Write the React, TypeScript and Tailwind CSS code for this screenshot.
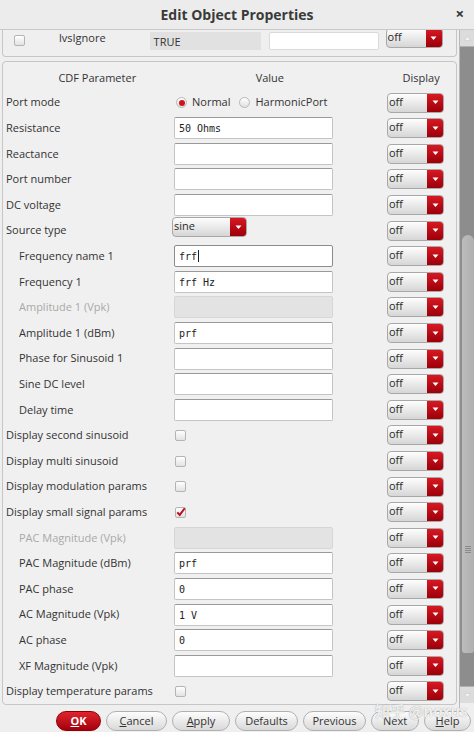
import React from 'react';

type Row = {
  label: string;
  indent?: boolean;
  disabled?: boolean;
  kind: 'input' | 'radio' | 'check' | 'select';
  value?: string;
  checked?: boolean;
  focus?: boolean;
};

const rows: Row[] = [
  { label: 'Port mode', kind: 'radio' },
  { label: 'Resistance', kind: 'input', value: '50 Ohms' },
  { label: 'Reactance', kind: 'input' },
  { label: 'Port number', kind: 'input' },
  { label: 'DC voltage', kind: 'input' },
  { label: 'Source type', kind: 'select', value: 'sine' },
  { label: 'Frequency name 1', indent: true, kind: 'input', value: 'frf', focus: true },
  { label: 'Frequency 1', indent: true, kind: 'input', value: 'frf Hz' },
  { label: 'Amplitude 1 (Vpk)', indent: true, kind: 'input', disabled: true },
  { label: 'Amplitude 1 (dBm)', indent: true, kind: 'input', value: 'prf' },
  { label: 'Phase for Sinusoid 1', indent: true, kind: 'input' },
  { label: 'Sine DC level', indent: true, kind: 'input' },
  { label: 'Delay time', indent: true, kind: 'input' },
  { label: 'Display second sinusoid', kind: 'check' },
  { label: 'Display multi sinusoid', kind: 'check' },
  { label: 'Display modulation params', kind: 'check' },
  { label: 'Display small signal params', kind: 'check', checked: true },
  { label: 'PAC Magnitude (Vpk)', indent: true, kind: 'input', disabled: true },
  { label: 'PAC Magnitude (dBm)', indent: true, kind: 'input', value: 'prf' },
  { label: 'PAC phase', indent: true, kind: 'input', value: '0' },
  { label: 'AC Magnitude (Vpk)', indent: true, kind: 'input', value: '1 V' },
  { label: 'AC phase', indent: true, kind: 'input', value: '0' },
  { label: 'XF Magnitude (Vpk)', indent: true, kind: 'input' },
  { label: 'Display temperature params', kind: 'check' },
];

function Combo({ value, wide }: { value: string; wide?: boolean }) {
  return (
    <div
      className={`flex h-[20px] ${wide ? 'w-[75px]' : 'w-[57px]'} overflow-hidden rounded-[4px] border border-[#a8a8a8] bg-linear-to-b from-[#fefefe] to-[#d6d6d6]`}
    >
      <span className="flex-1 pl-[1px] text-[11px] leading-[16px] text-[#2a2a2a]">{value}</span>
      <span className="flex w-[16px] items-center justify-center bg-linear-to-b from-[#d81822] to-[#9c0009]">
        <svg width="7" height="5" viewBox="0 0 7 5">
          <path d="M0.5 0.5h6L3.5 4z" fill="#fff" />
        </svg>
      </span>
    </div>
  );
}

function Check({ checked }: { checked?: boolean }) {
  return (
    <div className="relative h-[11px] w-[11px] rounded-[2px] border border-[#b4b4b4] bg-linear-to-b from-[#ffffff] to-[#e2e2e2]">
      {checked && (
        <svg className="absolute -top-[1px] left-[0px]" width="10" height="10" viewBox="0 0 12 12">
          <path d="M1.5 6.5 L4.5 9.5 L10.5 1.5" stroke="#c0101a" strokeWidth="2.4" fill="none" />
        </svg>
      )}
    </div>
  );
}

function Radio({ on }: { on?: boolean }) {
  return (
    <div className="flex h-[11px] w-[11px] items-center justify-center rounded-full border border-[#b8b8b8] bg-linear-to-b from-[#ffffff] to-[#e0e0e0]">
      {on && <div className="h-[6px] w-[6px] rounded-full bg-[#d0101c]" />}
    </div>
  );
}

function Field({ value, disabled, focus }: { value?: string; disabled?: boolean; focus?: boolean }) {
  return (
    <div
      className={`h-[22px] w-[159px] rounded-[2px] border pl-[4px] font-['DejaVu_Sans_Mono',monospace] text-[10px] leading-[21px] text-[#222] ${
        disabled
          ? 'border-[#d6d6d6] bg-[#e3e3e3]'
          : focus
          ? 'border-[#8c8c8c] bg-white'
          : 'border-[#c4c4c4] border-t-[#9a9a9a] bg-white'
      }`}
    >
      {value}
      {focus && <span className="ml-[1px] inline-block h-[12px] w-px translate-y-[2px] bg-[#222]" />}
    </div>
  );
}

function Btn({ children, red, w }: { children: React.ReactNode; red?: boolean; w: string }) {
  return (
    <div
      className={`flex h-[20px] ${w} items-center justify-center rounded-full border text-[11px] ${
        red
          ? 'border-[#8e0008] bg-linear-to-b from-[#e0222c] to-[#a3000b] font-bold text-white'
          : 'border-[#b0b0b0] bg-linear-to-b from-[#fdfdfd] to-[#d9d9d9] text-[#333]'
      }`}
    >
      {children}
    </div>
  );
}

export default function App() {
  return (
    <div className="relative flex h-[732px] w-[474px] flex-col overflow-hidden bg-[#efefef] font-['Open_Sans',sans-serif] text-[#333]">
      {/* title bar */}
      <div className="relative flex h-[30px] shrink-0 items-center justify-center border-b border-[#c9c9c9] bg-[#ececec]">
        <span className="text-[14px] font-bold text-[#3a3a3a]">Edit Object Properties</span>
        <span className="absolute right-[10px] top-[6px] text-[15px] font-bold leading-none text-[#333]">×</span>
      </div>

      <div className="flex h-[678px] shrink-0">
        <div className="flex w-[460px] flex-col border-r border-[#b9b9b9]">
          {/* top cut-off row */}
          <div className="mx-[2px] flex h-[27px] items-start rounded-b-[4px] border-x border-b border-[#c6c6c6] pt-[2px]">
            <div className="ml-[11px] mt-[3px]">
              <Check />
            </div>
            <span className="ml-[34px] text-[11px] leading-[12px]">lvsIgnore</span>
            <div className="ml-[44px] h-[18px] w-[111px] bg-[#e1e1e1] pl-[4px] text-[11px] leading-[20px] text-[#333]">TRUE</div>
            <div className="ml-[8px] h-[18px] w-[110px] rounded-[2px] border border-[#dadada] bg-white" />
            <div className="ml-[7px] -mt-[4px]">
              <Combo value="off" />
            </div>
          </div>

          {/* main panel */}
          <div className="mx-[2px] mt-[4px] flex h-[644px] flex-col rounded-[4px] border border-[#c6c6c6] bg-[#f0f0f0] pt-[4px]">
            <div className="flex h-[24px] items-center text-[11px] text-[#333]">
              <span className="w-[189px] text-center">CDF Parameter</span>
              <span className="w-[157px] text-center">Value</span>
              <span className="ml-[38px] w-[70px] text-center">Display</span>
            </div>
            {rows.map((r, i) => (
              <div key={i} className="flex h-[25.7px] items-center">
                <span
                  className={`w-[171px] shrink-0 text-[11px] ${r.indent ? 'pl-[16px]' : 'pl-[3px]'} ${
                    r.disabled ? 'text-[#a9a9a9]' : 'text-[#333]'
                  }`}
                >
                  {r.label}
                </span>
                <div className="flex w-[213px] shrink-0 items-center">
                  {r.kind === 'input' && <Field value={r.value} disabled={r.disabled} focus={r.focus} />}
                  {r.kind === 'check' && (
                    <div className="ml-[1px]">
                      <Check checked={r.checked} />
                    </div>
                  )}
                  {r.kind === 'radio' && (
                    <div className="ml-[2px] flex items-center text-[11px]">
                      <Radio on />
                      <span className="ml-[5px]">Normal</span>
                      <span className="ml-[9px]">
                        <Radio />
                      </span>
                      <span className="ml-[5px]">HarmonicPort</span>
                    </div>
                  )}
                  {r.kind === 'select' && (
                    <div className="-ml-[2px] -mt-[7px]">
                      <Combo value={r.value ?? ''} wide />
                    </div>
                  )}
                </div>
                <Combo value="off" />
              </div>
            ))}
          </div>
        </div>

        {/* scrollbar */}
        <div className="flex w-[14px] flex-col bg-[#8d8d8d]">
          <div className="flex h-[17px] items-center justify-center border-b border-[#b0b0b0] bg-[#dcdcdc]">
            <svg width="7" height="5" viewBox="0 0 7 5">
              <path d="M3.5 0.5L6.5 4.5h-6z" fill="#f4f4f4" stroke="#c4c4c4" strokeWidth="0.5" />
            </svg>
          </div>
          <div className="h-[188px]" />
          <div className="ml-[2px] flex h-[418px] flex-col items-center justify-center rounded-t-[6px] rounded-b-[3px] bg-linear-to-r from-[#bcbcbc] to-[#b0b0b0]">
            <div className="mt-[210px] flex flex-col gap-[1px]">
              <div className="h-px w-[6px] bg-[#8a8a8a]" />
              <div className="h-px w-[6px] bg-[#8a8a8a]" />
              <div className="h-px w-[6px] bg-[#8a8a8a]" />
              <div className="h-px w-[6px] bg-[#8a8a8a]" />
            </div>
          </div>
          <div className="flex-1" />
          <div className="flex h-[17px] items-center justify-center border-t border-[#b0b0b0] bg-[#dcdcdc]">
            <svg width="7" height="5" viewBox="0 0 7 5">
              <path d="M0.5 0.5h6L3.5 4.5z" fill="#f4f4f4" stroke="#c4c4c4" strokeWidth="0.5" />
            </svg>
          </div>
          <div className="h-[5px] bg-[#efefef]" />
        </div>
      </div>

      {/* button bar */}
      <div className="flex h-[24px] shrink-0 items-start justify-end gap-[5px] pr-[3px] pt-[3px]">
        <Btn red w="w-[45px]">
          <span className="underline">O</span>K
        </Btn>
        <Btn w="w-[61px]">
          <span className="underline">C</span>ancel
        </Btn>
        <Btn w="w-[58px]">
          <span className="underline">A</span>pply
        </Btn>
        <Btn w="w-[63px]">Defaults</Btn>
        <Btn w="w-[63px]">Previous</Btn>
        <Btn w="w-[48px]">Next</Btn>
        <Btn w="w-[47px]">
          <span className="underline">H</span>elp
        </Btn>
      </div>

      {/* watermark */}
      <div className="pointer-events-none absolute left-[375px] top-[700px] font-['Noto_Sans_CJK_SC',sans-serif] text-[15px] font-semibold text-white/85 [text-shadow:0_0_1px_#8a8a8a]">
        知乎 @noxus
      </div>
    </div>
  );
}
